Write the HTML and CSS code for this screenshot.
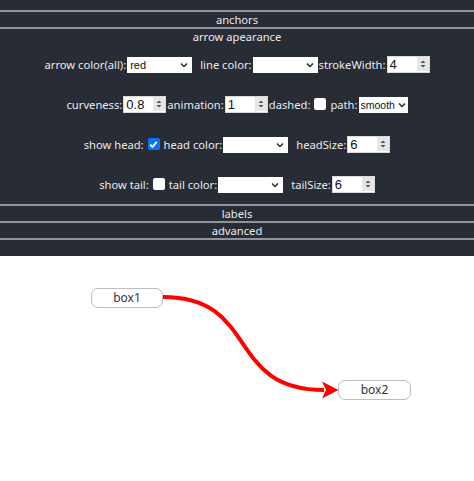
FILE: index.html
```html
<!DOCTYPE html>
<html>
<head>
<meta charset="utf-8">
<link rel="stylesheet" href="styles.css">
</head>
<body>
<div class="panel">
  <div class="top-space"></div>
  <div class="rule"></div>
  <div class="title">anchors</div>
  <div class="rule"></div>
  <div class="title">arrow apearance</div>

  <div class="row">
    <span class="lbl">arrow color(all):</span>
    <span class="sel w65"><select><option>red</option></select><svg class="chev" width="8" height="6" viewBox="0 0 8 6"><path d="M1 1.5 L4 4.5 L7 1.5" fill="none" stroke="#222" stroke-width="1.4"/></svg></span>
    <span class="lbl ml8">line color:</span>
    <span class="sel w65"><select><option></option></select><svg class="chev" width="8" height="6" viewBox="0 0 8 6"><path d="M1 1.5 L4 4.5 L7 1.5" fill="none" stroke="#222" stroke-width="1.4"/></svg></span>
    <span class="lbl">strokeWidth:</span>
    <span class="num"><input type="text" value="4"><svg class="spin" width="12" height="14" viewBox="0 0 12 14"><rect width="12" height="14" fill="#e6e6e6"/><path d="M3.5 6 L6 3.5 L8.5 6 Z M3.5 8 L6 10.5 L8.5 8 Z" fill="#555"/></svg></span>
  </div>

  <div class="row">
    <span class="lbl">curveness:</span>
    <span class="num"><input type="text" value="0.8"><svg class="spin" width="12" height="14" viewBox="0 0 12 14"><rect width="12" height="14" fill="#e6e6e6"/><path d="M3.5 6 L6 3.5 L8.5 6 Z M3.5 8 L6 10.5 L8.5 8 Z" fill="#555"/></svg></span>
    <span class="lbl">animation:</span>
    <span class="num"><input type="text" value="1"><svg class="spin" width="12" height="14" viewBox="0 0 12 14"><rect width="12" height="14" fill="#e6e6e6"/><path d="M3.5 6 L6 3.5 L8.5 6 Z M3.5 8 L6 10.5 L8.5 8 Z" fill="#555"/></svg></span>
    <span class="lbl">dashed:</span>
    <span class="box ml3"></span>
    <span class="lbl ml3">path:</span>
    <span class="sel w49"><select class="small"><option>smooth</option></select><svg class="chev tight" width="8" height="6" viewBox="0 0 8 6"><path d="M1 1.5 L4 4.5 L7 1.5" fill="none" stroke="#222" stroke-width="1.4"/></svg></span>
  </div>

  <div class="row">
    <span class="lbl">show head:</span>
    <span class="box checked ml3"><svg width="11" height="11" viewBox="0 0 11 11"><path d="M2.2 5.6 L4.5 7.9 L8.8 2.8" fill="none" stroke="#fff" stroke-width="1.8"/></svg></span>
    <span class="lbl ml3">head color:</span>
    <span class="sel w65"><select><option></option></select><svg class="chev" width="8" height="6" viewBox="0 0 8 6"><path d="M1 1.5 L4 4.5 L7 1.5" fill="none" stroke="#222" stroke-width="1.4"/></svg></span>
    <span class="lbl ml8">headSize:</span>
    <span class="num"><input type="text" value="6"><svg class="spin" width="12" height="14" viewBox="0 0 12 14"><rect width="12" height="14" fill="#e6e6e6"/><path d="M3.5 6 L6 3.5 L8.5 6 Z M3.5 8 L6 10.5 L8.5 8 Z" fill="#555"/></svg></span>
  </div>

  <div class="row">
    <span class="lbl">show tail:</span>
    <span class="box ml3"></span>
    <span class="lbl ml3">tail color:</span>
    <span class="sel w65"><select><option></option></select><svg class="chev" width="8" height="6" viewBox="0 0 8 6"><path d="M1 1.5 L4 4.5 L7 1.5" fill="none" stroke="#222" stroke-width="1.4"/></svg></span>
    <span class="lbl ml8">tailSize:</span>
    <span class="num"><input type="text" value="6"><svg class="spin" width="12" height="14" viewBox="0 0 12 14"><rect width="12" height="14" fill="#e6e6e6"/><path d="M3.5 6 L6 3.5 L8.5 6 Z M3.5 8 L6 10.5 L8.5 8 Z" fill="#555"/></svg></span>
  </div>

  <div class="rule"></div>
  <div class="title">labels</div>
  <div class="rule"></div>
  <div class="title">advanced</div>
  <div class="rule"></div>
  <div class="bottom-space"></div>
</div>

<div class="canvas">
  <svg class="arrow" width="474" height="225" viewBox="0 256 474 225">
    <path d="M163 297 C 260 297, 225 390, 324 390" fill="none" stroke="#f00" stroke-width="4"/>
    <path d="M322 381.5 L338.5 390 L322 398.5 L326 390 Z" fill="#f00"/>
  </svg>
  <div class="node node1">box1</div>
  <div class="node node2">box2</div>
</div>
</body>
</html>
```

FILE: styles.css
```css
html, body {
  margin: 0;
  padding: 0;
  background: #fff;
}

body {
  font-family: "Noto Sans", "Open Sans", sans-serif;
  width: 474px;
  height: 481px;
  overflow: hidden;
}

.panel {
  background: #282c34;
  color: #e9eaec;
  font-size: 11.2px;
  display: flex;
  flex-direction: column;
}

.top-space { height: 10px; }
.bottom-space { height: 16px; }

.rule {
  height: 2px;
  background: #8f939a;
}

.title {
  height: 15px;
  line-height: 15px;
  text-align: center;
}

.row {
  height: 40px;
  display: flex;
  align-items: center;
  justify-content: center;
  gap: 1px;
}

.lbl { white-space: nowrap; }
.ml3 { margin-left: 3px; }
.ml8 { margin-left: 7px; }

.sel {
  position: relative;
  display: inline-block;
  height: 15px;
  background: #fff;
}
.w65 { width: 65px; }
.w49 { width: 49px; }

.sel select {
  appearance: none;
  -webkit-appearance: none;
  border: 0;
  outline: 0;
  margin: 0;
  padding: 0 0 0 3px;
  width: 100%;
  height: 15px;
  background: #fff;
  color: #111;
  font-family: "Liberation Sans", sans-serif;
  font-size: 11px;
  line-height: 15px;
}

.sel select.small {
  font-size: 10.5px;
  padding-left: 2px;
}

.chev {
  position: absolute;
  right: 4px;
  top: 5px;
  pointer-events: none;
}

.chev.tight { right: 2px; }

.num {
  display: inline-flex;
  align-items: center;
  width: 43px;
  height: 17px;
  box-sizing: border-box;
  background: #fff;
  border: 1px solid #d9d9d9;
}

.num input {
  width: 26px;
  border: 0;
  outline: 0;
  margin: 0;
  padding: 0 0 0 2px;
  height: 15px;
  font-family: "Liberation Sans", sans-serif;
  font-size: 13px;
  color: #111;
  background: transparent;
}

.spin {
  margin-left: 1px;
  display: block;
}

.box {
  display: inline-flex;
  align-items: center;
  justify-content: center;
  width: 12px;
  height: 12px;
  box-sizing: border-box;
  background: #fff;
  border-radius: 2px;
}

.box.checked {
  background: #0a74f0;
}

.box svg { display: block; }

.canvas {
  position: relative;
  height: 225px;
  background: #fff;
}

.arrow {
  position: absolute;
  left: 0;
  top: 0;
}

.node {
  position: absolute;
  width: 72px;
  height: 20px;
  box-sizing: border-box;
  border: 1px solid #bdbdbd;
  border-radius: 7px;
  background: #fff;
  color: #333;
  font-size: 12px;
  line-height: 18px;
  text-align: center;
}

.node1 { left: 91px; top: 32px; }
.node2 { left: 338px; top: 124px; width: 73px; }
```
